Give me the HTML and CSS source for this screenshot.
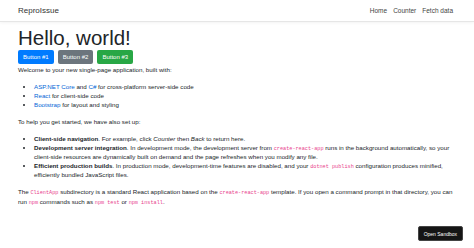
FILE: index.html
```html
<html>
  <head>
    <meta name="viewport" content="width=device-width, initial-scale=1.0">
    <link rel="stylesheet" href="styles.css">
  </head>
  <body>
    <header class="navbar">
      <a class="brand" href="#">ReproIssue</a>
      <ul class="navLinks">
        <li><a href="#">Home</a></li>
        <li><a href="#">Counter</a></li>
        <li><a href="#">Fetch data</a></li>
      </ul>
    </header>

    <div class="container">
      <h1>Hello, world!</h1>
      <div class="buttons">
        <button class="btn blue">Button #1</button>
        <button class="btn grey">Button #2</button>
        <button class="btn green">Button #3</button>
      </div>
      <p class="first">Welcome to your new single-page application, built with:</p>
      <ul>
        <li><a href="#">ASP.NET Core</a> and <a href="#">C#</a> for cross-platform server-side code</li>
        <li><a href="#">React</a> for client-side code</li>
        <li><a href="#">Bootstrap</a> for layout and styling</li>
      </ul>
      <p>To help you get started, we have also set up:</p>
      <ul>
        <li><strong>Client-side navigation</strong>. For example, click <em>Counter</em> then <em>Back</em> to return here.</li>
        <li><strong>Development server integration</strong>. In development mode, the development server from <code>create-react-app</code> runs in the background automatically, so your client-side resources are dynamically built on demand and the page refreshes when you modify any file.</li>
        <li><strong>Efficient production builds</strong>. In production mode, development-time features are disabled, and your <code>dotnet publish</code> configuration produces minified, efficiently bundled JavaScript files.</li>
      </ul>
      <p>The <code>ClientApp</code> subdirectory is a standard React application based on the <code>create-react-app</code> template. If you open a command prompt in that directory, you can run <code>npm</code> commands such as <code>npm test</code> or <code>npm install</code>.</p>
    </div>

    <button class="sandbox">Open Sandbox</button>
  </body>
</html>
```
FILE: styles.css
```css
body {
  margin: 0;
  font-family: "Liberation Sans", Arial, sans-serif;
  font-size: 6.2px;
  line-height: 9px;
  color: #212529;
  background: #fff;
}
a {
  color: #0366d6;
  text-decoration: none;
}
.navbar {
  height: 22px;
  display: flex;
  align-items: center;
  justify-content: space-between;
  padding: 0 21px 0 18px;
  border-bottom: 1px solid #e6e6e6;
  box-shadow: 0 1px 3px rgba(0, 0, 0, 0.05);
  box-sizing: border-box;
}
.brand {
  color: #333;
  font-size: 8px;
}
.navLinks {
  display: flex;
  gap: 6px;
  list-style: none;
  margin: 0;
  padding: 0;
}
.navLinks a {
  color: #444;
  font-size: 6.5px;
}
.container {
  padding: 0 18px;
}
h1 {
  font-size: 20.5px;
  font-weight: 500;
  line-height: 24px;
  margin: 4px 0 0;
}
.buttons {
  display: flex;
  gap: 4px;
}
.btn {
  height: 14px;
  padding: 0 5px;
  border: none;
  border-radius: 2px;
  color: #fff;
  font-family: inherit;
  font-size: 6px;
}
.blue { background: #007bff; }
.grey { background: #6c757d; }
.green { background: #28a745; }
p {
  margin: 1px 0 8px;
}
ul {
  margin: 0 0 8px;
  padding-left: 16px;
}
code {
  font-family: "Liberation Mono", monospace;
  font-size: 5.2px;
  line-height: 1;
  color: #e83e8c;
}
.sandbox {
  position: fixed;
  right: 11px;
  bottom: 7px;
  height: 15px;
  padding: 0 5px;
  background: #151515;
  color: #fff;
  border: 1px solid #444;
  border-radius: 2px;
  font-family: inherit;
  font-size: 5px;
}
```
